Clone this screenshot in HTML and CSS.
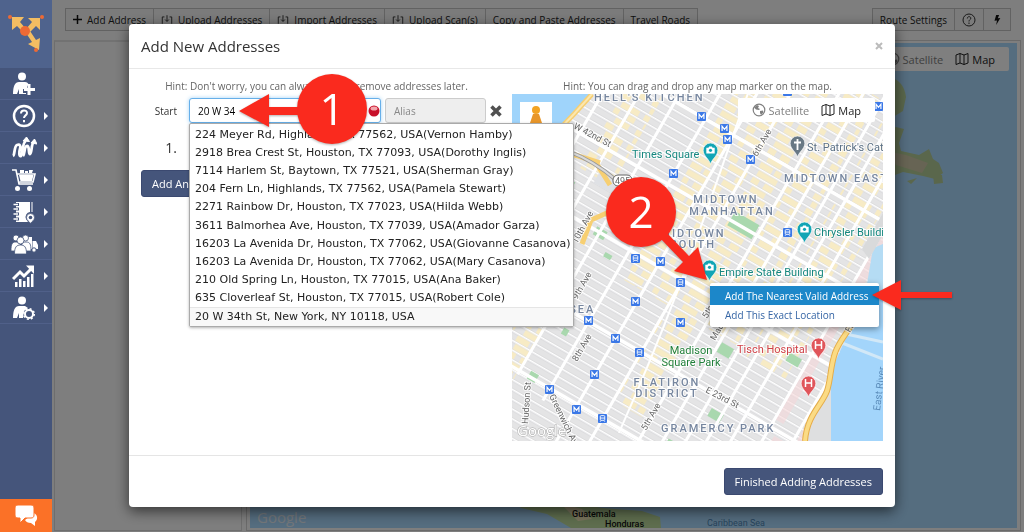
FILE: index.html
```html
<!DOCTYPE html>
<html lang="en">
  <head>
    <meta charset="UTF-8" />
    <meta name="viewport" content="width=device-width, initial-scale=1.0" />
    <title>Add New Addresses</title>
    <link rel="stylesheet" href="styles.css">
  </head>
  <body>
    <!-- Shared icons -->
    <svg class="defs" aria-hidden="true">
      <symbol id="tray" viewBox="0 0 14 12">
        <path d="M4 3H1.500v8M10 3h2.500v8M7 1v7M4.800 6 7 8.300 9.200 6" fill="none" stroke="currentColor" />
      </symbol>
      <symbol id="globe" viewBox="0 0 14 14">
        <circle cx="7" cy="7" r="5.800" fill="none" stroke="currentColor" stroke-width="1.200" />
        <path d="M2 4.500 5 2l2 1-1 2 2 1-1 1-3-.500zM8 8l3-.500.500 2L9 12 8 10z" fill="currentColor" />
      </symbol>
      <symbol id="fold" viewBox="0 0 14 14">
        <path d="M1 3l4-1.500v9.500L1 12.500zM5 1.500 9 3v9.500L5 11M9 3l4-1.500v9.500L9 12.500" fill="none" stroke="currentColor" />
      </symbol>
      <symbol id="metro" viewBox="0 0 10 10">
        <rect width="10" height="10" rx="1" fill="#3b78e7" />
        <path d="M2.300 7.800V2.500L5 6l2.700-3.500v5.300" fill="none" stroke="#fff" stroke-width="1.300" />
      </symbol>
      <symbol id="train" viewBox="0 0 10 10">
        <rect width="10" height="10" rx="1" fill="#3b78e7" />
        <rect x="2.500" y="1.800" width="5" height="5.200" rx="1" fill="none" stroke="#fff" />
        <path d="M2.500 4.500h5M3.500 7 2.500 8.500M6.500 7l1 1.500" stroke="#fff" />
      </symbol>
      <symbol id="pin" viewBox="0 0 16 22">
        <path d="M8 21.500C7.500 17 1 13.500 1 8a7 7 0 0 1 14 0c0 5.500-6.500 9-7 13.500z" fill="currentColor" stroke="#fff" stroke-width=".600" />
      </symbol>
      <symbol id="camera" viewBox="0 0 16 22">
        <use href="#pin" />
        <path d="M4 5.500h2l.700-1.200h2.600l.700 1.200h2v5.500H4z" fill="#fff" />
        <circle cx="8" cy="8" r="1.500" fill="currentColor" />
      </symbol>
    </svg>

    <div class="app">
      <nav class="sidebar">
        <a class="logo" href="#" aria-label="Home">
          <svg viewBox="0 0 36 38" width="36" height="38">
            <g fill="#f3bd62">
              <path d="M15 17 9 11l-5 4V2h12l-4 5 6 7zM18 14l6-7-4-4h12v12l-4-4-7 7zM18 18l4-2 6 9 4-2-1 12-11-6 4-2z" />
            </g>
            <g fill="#ed6a35">
              <circle cx="17" cy="16" r="5" /><circle cx="2" cy="2" r="2" />
              <circle cx="34" cy="2" r="2" /><circle cx="28" cy="35" r="2" />
            </g>
          </svg>
        </a>
        <a class="nav-item" href="#" aria-label="Add user">
          <svg viewBox="0 0 24 24" width="24" height="24" fill="#fff">
            <circle cx="10" cy="4.500" r="4" />
            <path d="M1 22c0-8 2-12 6-12h6c2 0 3 1 4 3l-2 1v3h-4v4h3v1H7v-5l-2 5z" />
            <path d="M17 12v11M12 17.500h11" stroke="#fff" stroke-width="3" />
          </svg>
        </a>
        <a class="nav-item more" href="#" aria-label="Help">
          <svg viewBox="0 0 24 24" width="24" height="24" fill="none" stroke="#fff">
            <circle cx="12" cy="12" r="10" stroke-width="2.500" />
            <path d="M9 9.500c0-4 6-4 6-.500 0 2.500-3 2.200-3 5M12 16v2.200" stroke-width="2" />
          </svg>
        </a>
        <a class="nav-item more" href="#" aria-label="Routes">
          <svg viewBox="0 0 26 24" width="26" height="24" fill="none" stroke="#fff" stroke-width="2.800">
            <path d="M2 20c2-1 1-10 4-11s4 1 3 4-1 8 1 7 1-14 5-15" />
            <path d="M12 20c2-2 1-10 4-10s1 8 3 8 1-11 4-12" />
            <path d="M12 5l3.500-4 3 4.500zM20 7l3.500-4 2.500 5z" fill="#fff" stroke-width="1" />
          </svg>
        </a>
        <a class="nav-item more" href="#" aria-label="Orders">
          <svg viewBox="0 0 24 24" width="24" height="24" fill="#fff">
            <path d="M0 2h4l3 14h14M5.500 6H23l-2 8H7.500" fill="none" stroke="#fff" stroke-width="1.600" />
            <path d="M7 7h14.500l-1.500 6H8.500zM8 2h4v3H8zM13 3h3v2h-3zM17 2h4l-1 3h-3z" />
            <circle cx="5.500" cy="20.500" r="2.500" /><circle cx="17.500" cy="20.500" r="2.500" />
          </svg>
        </a>
        <a class="nav-item more" href="#" aria-label="Address book">
          <svg viewBox="0 0 24 24" width="24" height="24" fill="#fff">
            <path d="M4 2h14v10a5 5 0 0 0-4 7l2 3H4z" />
            <path d="M1.500 4.500H7M1.500 9H7M1.500 14H7M1.500 19H7" stroke="#45557b" stroke-width="3" />
            <path d="M1.500 4.500H6M1.500 9H6M1.500 14H6M1.500 19H6" stroke="#fff" stroke-width="1.500" />
            <path d="M18.500 23.500c-1-2-4-3-4-6a4 4 0 0 1 8 0c0 3-3 4-4 6z" stroke="#45557b" stroke-width=".700" />
            <circle cx="18.500" cy="17.500" r="1.800" fill="#45557b" /><path d="M19.500 2h1v10h-1z" />
          </svg>
        </a>
        <a class="nav-item more" href="#" aria-label="Team">
          <svg viewBox="0 0 28 24" width="28" height="24" fill="#fff">
            <path d="M14 5h8v12h-8zM22.500 9H26l2 4v4h-5.500z" />
            <circle cx="24" cy="18" r="2.200" stroke="#45557b" />
            <g stroke="#45557b" stroke-width=".800">
              <circle cx="6" cy="6" r="3" /><circle cx="15.500" cy="6" r="3" />
              <path d="M1 19c0-7 1-9 5-9s5 2 5 9zM11 19c0-7 1-9 5-9s5 2 5 9z" />
              <circle cx="10.500" cy="8.500" r="3.500" /><path d="M4.500 22c0-7 2-9 6-9s6 2 6 9z" />
            </g>
          </svg>
        </a>
        <a class="nav-item more" href="#" aria-label="Reports">
          <svg viewBox="0 0 24 24" width="24" height="24" fill="#fff">
            <path d="M3 18h2.500v5H3zM7 15h2.500v8H7zM11 17h2.500v6H11zM15 13h2.500v10H15zM19 10h2.500v13H19z" />
            <path d="M1 15l7-7 4 4 7-7" fill="none" stroke="#fff" stroke-width="3" /><path d="M14 1.500h8V10z" />
          </svg>
        </a>
        <a class="nav-item more" href="#" aria-label="Account settings">
          <svg viewBox="0 0 24 24" width="24" height="24" fill="#fff">
            <circle cx="10" cy="4.500" r="4" />
            <path d="M1 22c0-8 2-12 6-12h6l3 2-4 3-1 7H7v-5l-2 5z" />
            <circle cx="17" cy="18" r="4" fill="none" stroke="#fff" stroke-width="2" />
            <circle cx="17" cy="18" r="5.300" fill="none" stroke="#fff" stroke-width="1.500" stroke-dasharray="2 2.160" />
          </svg>
        </a>
        <a class="chat" href="#" aria-label="Chat">
          <svg viewBox="0 0 24 24" width="24" height="24" fill="#fff">
            <path d="M20 9c4 2 4 7 1 9v4l-4-3c-3 0-5-1-6-3" />
            <path d="M4 1h13c2 0 3 1 3 3v7c0 2-1 3-3 3h-6l-5 5v-5H4c-2 0-3-1-3-3V4c0-2 1-3 3-3z" stroke="#fb7127" />
          </svg>
        </a>
      </nav>

      <main class="content">
        <div class="toolbar">
          <div class="btn-group">
            <button type="button"><svg width="9" height="9" viewBox="0 0 9 9"><path d="M4.500 0v9M0 4.500h9" stroke="#111" stroke-width="1.500" /></svg>Add Address</button>
            <button type="button"><svg width="12" height="11"><use href="#tray" /></svg>Upload Addresses</button>
            <button type="button"><svg width="12" height="11"><use href="#tray" /></svg>Import Addresses</button>
            <button type="button"><svg width="12" height="11"><use href="#tray" /></svg>Upload Scan(s)</button>
            <button type="button">Copy and Paste Addresses</button>
            <button type="button">Travel Roads</button>
          </div>
          <div class="btn-group">
            <button type="button">Route Settings</button>
            <button type="button" aria-label="Help"><svg width="14" height="14" viewBox="0 0 14 14" fill="none" stroke="#333"><circle cx="7" cy="7" r="6" /><path d="M5.300 5.500c0-2.500 3.500-2.300 3.500-.300C8.800 6.700 7 6.500 7 8.500M7 9.500V11" /></svg></button>
            <button type="button" aria-label="Quick actions"><svg width="12" height="10" viewBox="0 0 12 12"><path d="M5 0h3.500L7 4l3-.500L5 12l1-5.500-3 .500z" fill="#111" /></svg></button>
          </div>
        </div>

        <div class="workspace">
          <div class="routes-panel"></div>
          <div class="map-panel">
            <div class="world-map">
              <svg class="map-art" viewBox="0 0 767 485" preserveAspectRatio="xMaxYMax slice">
                <rect width="767" height="485" fill="#aadaff" />
                <path d="M620 34h20q14 4 16 20l-3 14-10 6-23 2z" fill="#b5cf98" />
                <path d="M620 96l26-12 8 2-5 14 2 8 18 4 10-6 4 10 6 4 4 10-8 6-12-3-20-4-16 6-17-6z" fill="#b5cf98" />
                <path d="M636 108l20 4 22 8-6 10-26-8z" fill="#cfc9a8" />
                <path d="M683 131l9 1 1 8-9 1zM657 138l10-3-6 6z" fill="#b5cf98" />
                <path d="M262 455l40 0 20 4 30 6 40 3 18 6 1 11h-90l-24-14-26-6z" fill="#bddb9c" />
                <path d="M310 460l22 6 10 10-14 2z" fill="#f2e6b8" />
                <text class="word-mark" x="7" y="480">Google</text>
                <g class="country"><text x="322" y="474">Guatemala</text><text x="355" y="484">Honduras</text></g>
                <text class="sea" x="457" y="483">Caribbean Sea</text>
              </svg>
              <div class="map-type">
                <button type="button"><svg width="14" height="14"><use href="#globe" /></svg>Satellite</button>
                <button type="button" class="active"><svg width="14" height="14"><use href="#fold" /></svg>Map</button>
              </div>
            </div>
          </div>
        </div>
      </main>
    </div>

    <div class="overlay">
      <section class="modal" role="dialog" aria-labelledby="modal-title">
        <header class="modal-header">
          <h1 id="modal-title">Add New Addresses</h1>
          <button type="button" class="close" aria-label="Close">
            <svg width="8" height="8" viewBox="0 0 8 8"><path d="M1 1l6 6M7 1 1 7" stroke="#bbb" stroke-width="2" /></svg>
          </button>
        </header>

        <div class="modal-body">
          <form class="addresses">
            <p class="hint">Hint: Don't worry, you can always add or remove addresses later.</p>
            <div class="address-row">
              <label for="start">Start</label>
              <div class="combo">
                <input id="start" type="text" value="20 W 34" autocomplete="off" />
                <svg class="status" width="12" height="12" viewBox="0 0 12 12"><circle cx="6" cy="6" r="5.500" fill="#c8102a" /><ellipse cx="6" cy="3.500" rx="3.500" ry="2" fill="#f2a6ac" /></svg>
                <ul class="suggestions">
                  <li><a href="#">224 Meyer Rd, Highlands, TX 77562, USA(Vernon Hamby)</a></li>
                  <li><a href="#">2918 Brea Crest St, Houston, TX 77093, USA(Dorothy Inglis)</a></li>
                  <li><a href="#">7114 Harlem St, Baytown, TX 77521, USA(Sherman Gray)</a></li>
                  <li><a href="#">204 Fern Ln, Highlands, TX 77562, USA(Pamela Stewart)</a></li>
                  <li><a href="#">2271 Rainbow Dr, Houston, TX 77023, USA(Hilda Webb)</a></li>
                  <li><a href="#">3611 Balmorhea Ave, Houston, TX 77039, USA(Amador Garza)</a></li>
                  <li><a href="#">16203 La Avenida Dr, Houston, TX 77062, USA(Giovanne Casanova)</a></li>
                  <li><a href="#">16203 La Avenida Dr, Houston, TX 77062, USA(Mary Casanova)</a></li>
                  <li><a href="#">210 Old Spring Ln, Houston, TX 77015, USA(Ana Baker)</a></li>
                  <li><a href="#">635 Cloverleaf St, Houston, TX 77015, USA(Robert Cole)</a></li>
                  <li class="geocoded"><a href="#">20 W 34th St, New York, NY 10118, USA</a></li>
                </ul>
              </div>
              <input class="alias" type="text" placeholder="Alias" aria-label="Alias" />
              <button type="button" class="remove" aria-label="Remove address">
                <svg width="12" height="12" viewBox="0 0 12 12"><path d="M1.500 1.500l9 9M10.500 1.500l-9 9" stroke="#505050" stroke-width="3.500" /></svg>
              </button>
            </div>
            <p class="stop-number">1.</p>
            <button type="button" class="primary">Add Another Address</button>
          </form>

          <div class="picker">
            <p class="hint">Hint: You can drag and drop any map marker on the map.</p>
            <div class="city-map">
              <svg class="map-art" viewBox="0 0 371 347" preserveAspectRatio="xMidYMid slice">
                <defs>
                  <pattern id="blocks" width="28" height="8.500" patternUnits="userSpaceOnUse">
                    <rect width="28" height="8.500" fill="#e4e4e5" /><path d="M0 .800h28" stroke="#fff" stroke-width="1.600" />
                    <path d="M0 2h28M0 8.300h28" stroke="#cfcfd2" stroke-width=".500" />
                  </pattern>
                  <pattern id="shops" width="62" height="34" patternUnits="userSpaceOnUse">
                    <path d="M2 2h14v6H2zM19 2h7v6h-7zM40 2h16v6H40zM4 10.500h22v6H4zM34 10.500h9v6h-9zM2 19h8v6H2zM16 19h10v6H16zM38 19h20v6H38zM6 27.500h16v6H6zM34 27.500h6v6h-6zM50 27.500h8v6h-8z" fill="#faedc0" opacity=".850" />
                  </pattern>
                </defs>
                <rect width="371" height="347" fill="#e9e9e9" />
                <g transform="rotate(30)">
                  <rect x="-10" y="-200" width="560" height="560" fill="url(#blocks)" />
                  <rect x="190" y="-180" width="130" height="285" fill="url(#shops)" />
                  <rect x="334" y="-220" width="45" height="330" fill="url(#shops)" />
                  <rect x="92" y="-90" width="40" height="120" fill="url(#shops)" />
                  <rect x="118" y="158" width="26" height="140" fill="url(#shops)" />
                  <rect x="240" y="105" width="42" height="110" fill="url(#shops)" />
                  <rect x="115" y="22" width="55" height="14" fill="#dfe1e5" />
                  <g fill="#a9d8ae">
                    <path d="M252-10h28v16h-28zM85 45h14v13H85zM140 72h12v9h-12zM160 90h8v5h-8zM306 110h14v11h-14zM370 85h14v9h-14zM155 230h9v9h-9zM308 220h14v13h-14zM330 172h14v9h-14zM162 176h6v7h-6z" />
                  </g>
                  <path d="M390-190h10v340h-10zM420 92h18v100h-18zM398 165h18v40h-18z" fill="#f5d7d8" opacity=".600" />
                  <g stroke="#fff" stroke-width="3" fill="none">
                    <path d="M78-120V400M110-130V400M145-150V240M180-160V250M212-180V400M241-190V400M283-200V400M304-210V400M324-220V400M342-230V400M363-240V400M390-250V400M417-260V400" />
                    <path d="M-20-75H460M60 0H460M60 76H430M60 159H470M60 236H470" stroke-width="3.500" />
                    <path d="M202-130C225 0 245 80 262 240" stroke-width="2" />
                  </g>
                </g>
                <!-- water -->
                <path d="M0 0h79L62 17 38 43 0 70z" fill="#9fd4fb" />
                <path d="M371 150v197h-52l-1-50 3-24 12-27 16-34z" fill="#a3d5fb" />
                <path d="M371 150l-10 4-10 60 20-20z" fill="#b5dcf4" />
                <path d="M325 247l46 18M334 240l37 8" stroke="#d2e8f7" stroke-width="3" />
                <path d="M319 347v-52l-7 8-16 36v8z" fill="#dedfe0" />
                <path d="M350 155l21-36v22l-14 24z" fill="#d9dadb" />
                <!-- highways and tunnel -->
                <path d="M80 0 62 20 44 39M60 60l28 9M83 67l15 24M70 150l9-24 18-8" fill="none" stroke="#f7cf72" stroke-width="5" />
                <path d="M80 0 62 20 44 39" fill="none" stroke="#fce7ae" stroke-width="2" />
                <path d="M28 47l28 10q26 10 48 29" fill="none" stroke="#9b9b9b" stroke-width="4" />
                <path d="M28 47l28 10q26 10 48 29" fill="none" stroke="#d9d9d9" stroke-width="2" />
                <path d="M343 225c-6 12-16 22-20 34-5 15-4 26-8 38-5 14-20 24-22 50" fill="none" stroke="#e5ad4a" stroke-width="6" />
                <path d="M343 225c-6 12-16 22-20 34-5 15-4 26-8 38-5 14-20 24-22 50" fill="none" stroke="#fbdb84" stroke-width="4" />
                <!-- stations -->
                <g>
                  <use href="#metro" x="185" y="18" width="9" height="9" /><use href="#metro" x="208" y="30" width="9" height="9" />
                  <use href="#metro" x="211" y="41" width="9" height="9" /><use href="#metro" x="234" y="61" width="9" height="9" />
                  <use href="#metro" x="228" y="8" width="9" height="9" /><use href="#metro" x="362" y="8" width="9" height="9" />
                  <use href="#metro" x="271" y="-7" width="9" height="9" /><use href="#metro" x="157" y="75" width="9" height="9" />
                  <use href="#metro" x="144" y="163" width="9" height="9" /><use href="#train" x="119" y="160" width="9" height="9" />
                  <use href="#train" x="164" y="184" width="9" height="9" /><use href="#metro" x="119" y="203" width="9" height="9" />
                  <use href="#metro" x="72" y="222" width="9" height="9" /><use href="#metro" x="164" y="224" width="9" height="9" />
                  <use href="#metro" x="99" y="240" width="9" height="9" /><use href="#train" x="123" y="254" width="9" height="9" />
                  <use href="#metro" x="78" y="276" width="9" height="9" /><use href="#metro" x="33" y="291" width="9" height="9" />
                  <use href="#metro" x="60" y="311" width="9" height="9" /><use href="#train" x="86" y="320" width="9" height="9" />
                  <use href="#train" x="271" y="134" width="9" height="9" />
                </g>
                <!-- landmarks -->
                <g color="#12a5b5">
                  <use href="#camera" x="190" y="48" width="17" height="23" /><use href="#camera" x="284" y="127" width="17" height="23" />
                  <use href="#camera" x="189" y="165" width="17" height="23" />
                </g>
                <use href="#pin" x="277" y="41" width="17" height="23" color="#687884" />
                <path d="M285.500 45v11M282 48.500h7" stroke="#fff" stroke-width="1.800" />
                <g color="#e0555a">
                  <use href="#pin" x="298" y="243" width="17" height="23" /><use href="#pin" x="288" y="281" width="17" height="23" />
                </g>
                <path d="M303.500 247v8M309.500 247v8M303.500 251h6M293.500 285v8M299.500 285v8M293.500 289h6" stroke="#fff" stroke-width="1.500" />
                <rect x="101" y="81" width="19" height="11" rx="5" fill="#fff" stroke="#666" />
                <text class="street" x="103" y="90">495</text>
                <g class="street">
                  <text transform="translate(61 34) rotate(28)">W 42nd St</text>
                  <text transform="translate(65 150) rotate(-62)">10th Ave</text>
                  <text transform="translate(65 206) rotate(-60)">9th Ave</text>
                  <text transform="translate(65 268) rotate(-60)">8th Ave</text>
                  <text transform="translate(245 63) rotate(-60)">6th Ave</text>
                  <text transform="translate(134 337) rotate(-60)">5th Ave</text>
                  <text transform="translate(195 225) rotate(-60)">5th Ave</text>
                  <text transform="translate(203 247) rotate(-60)">Madison</text>
                  <text transform="translate(16 330) rotate(-86)">Hudson St</text>
                  <text transform="translate(37 302) rotate(64)">Greenwich Ave</text>
                  <text transform="translate(193 298) rotate(27)">E 23rd St</text>
                  <text transform="translate(338 239) rotate(-60)">FDR Dr</text>
                </g>
                <text class="river" transform="translate(368 317) rotate(-83)">East River</text>
                <g class="district">
                  <text x="82" y="7">HELL'S KITCHEN</text>
                  <text x="272" y="88">MIDTOWN EAST</text>
                  <text x="214" y="109" text-anchor="middle">MIDTOWN</text><text x="220" y="121" text-anchor="middle">MANHATTAN</text>
                  <text x="181" y="143" text-anchor="middle">MIDTOWN</text><text x="181" y="154" text-anchor="middle">SOUTH</text>
                  <text x="22" y="219">CHELSEA</text>
                  <text x="155" y="292" text-anchor="middle">FLATIRON</text><text x="155" y="303" text-anchor="middle">DISTRICT</text>
                  <text x="149" y="338">GRAMERCY PARK</text>
                </g>
                <g class="place">
                  <text x="120" y="64">Times Square</text>
                  <text x="302" y="142">Chrysler Building</text>
                  <text x="207" y="182">Empire State Building</text>
                </g>
                <text class="place church" x="295" y="57">St. Patrick's Cathedral</text>
                <g class="place park"><text x="179" y="260" text-anchor="middle">Madison</text><text x="179" y="272" text-anchor="middle">Square Park</text></g>
                <text class="place hospital" x="225" y="259">Tisch Hospital</text>
                <text class="word-mark outlined" x="5" y="342">Google</text>
                <g>
                  <rect x="8" y="8" width="32" height="32" fill="#fff" />
                  <circle cx="24" cy="16" r="4" fill="#f2a324" /><path d="M21 20h6l3 9-2 1h-8l-2-1z" fill="#e8962a" />
                </g>
              </svg>
              <div class="map-type">
                <button type="button"><svg width="14" height="14"><use href="#globe" /></svg>Satellite</button>
                <button type="button" class="active"><svg width="14" height="14"><use href="#fold" /></svg>Map</button>
              </div>
              <div class="context-menu">
                <button type="button" class="active">Add The Nearest Valid Address</button>
                <button type="button">Add This Exact Location</button>
              </div>
            </div>
          </div>
        </div>

        <footer class="modal-footer">
          <button type="button" class="primary">Finished Adding Addresses</button>
        </footer>

        <!-- Numbered callouts -->
        <svg class="callout callout-one" width="130" height="72" viewBox="0 0 130 72">
          <path d="M1 38l30-17v13h35v8H31v12z" /><circle cx="94" cy="36" r="35" /><text x="94" y="52">1</text>
        </svg>
        <svg class="callout callout-two" width="104" height="106" viewBox="0 0 104 106">
          <path d="M102 104l-33-9 9-9-23-24 6-6 23 24 9-9z" /><circle cx="36" cy="36" r="35" /><text x="36" y="52">2</text>
        </svg>
        <svg class="callout callout-three" width="82" height="32" viewBox="0 0 82 32">
          <path d="M1 16 30 1v12h51v6H30v12z" />
        </svg>
      </section>
    </div>
  </body>
</html>
```
FILE: styles.css
```css
* {
  box-sizing: border-box;
}

body {
  margin: 0;
  font-family: "Open Sans", "Noto Sans", sans-serif;
  font-size: 11px;
  color: #333;
}

button,
input {
  font: inherit;
}

a {
  color: inherit;
  text-decoration: none;
}

.defs {
  position: absolute;
  width: 0;
  height: 0;
}

.app {
  display: flex;
  height: 100vh;
}

/* Sidebar stays above the dimmed page */
.sidebar {
  position: relative;
  z-index: 5;
  flex: 0 0 52px;
  display: flex;
  flex-direction: column;
  background: #45557b;
}

.logo {
  height: 68px;
  padding: 15px 8px;
  background: #4f638d;
}

.nav-item {
  position: relative;
  display: flex;
  align-items: center;
  justify-content: center;
  height: 32px;
  padding-right: 4px;
  border-bottom: 1px solid #506089;
}

.nav-item.more::after {
  content: "";
  position: absolute;
  right: 4px;
  border: 4px solid transparent;
  border-left-color: #fff;
  border-right: 0;
}

.chat {
  display: flex;
  align-items: center;
  justify-content: center;
  height: 33px;
  margin-top: auto;
  background: #fb7127;
}

.content {
  flex: 1;
  display: flex;
  flex-direction: column;
  min-width: 0;
  background: #fdfdfd;
}

.toolbar {
  display: flex;
  justify-content: space-between;
  padding: 8px 13px 9px;
}

.btn-group {
  display: flex;
}

.btn-group button {
  display: flex;
  align-items: center;
  gap: 5px;
  height: 23px;
  padding: 0 7px;
  border: 1px solid #c4c4c4;
  border-left-width: 0;
  background: #f6f6f6;
  color: #222;
  font-size: 10px;
  white-space: nowrap;
}

.btn-group button:first-child {
  border-left-width: 1px;
}

.workspace {
  flex: 1;
  display: flex;
  gap: 4px;
  padding: 0 3px 2px 2px;
}

.routes-panel {
  flex: 0 0 188px;
  border: 1px solid #ddd;
  border-top: 2px solid #e4e4e4;
}

.map-panel {
  flex: 1;
  display: flex;
  padding: 2px 3px;
  border: 1px solid #d4d4d4;
}

.world-map,
.city-map {
  position: relative;
  flex: 1;
}

.map-art {
  display: block;
  width: 100%;
  height: 100%;
}

.map-type {
  position: absolute;
  top: 4px;
  right: 8px;
  display: flex;
  gap: 12px;
  height: 24px;
  padding: 0 14px;
  border-radius: 2px;
  background: #fff;
}

.map-type button {
  display: flex;
  align-items: center;
  gap: 3px;
  padding: 0;
  border: 0;
  background: none;
  color: #808080;
}

.map-type .active {
  color: #222;
}

.overlay {
  position: fixed;
  inset: 0;
  padding-top: 24px;
  background: rgba(0, 0, 0, 0.5);
}

.modal {
  position: relative;
  width: 75%;
  max-width: 766px;
  margin: 0 auto;
  border-radius: 4px;
  background: #fff;
  box-shadow: 0 4px 14px rgba(0, 0, 0, 0.6);
}

.modal-header {
  display: flex;
  align-items: center;
  justify-content: space-between;
  height: 45px;
  padding: 0 12px;
  border-bottom: 1px solid #e8e8e8;
}

.modal-header h1 {
  margin: 0;
  font-size: 15px;
  font-weight: 400;
}

.close,
.remove {
  display: flex;
  padding: 0;
  border: 0;
  background: none;
}

.modal-body {
  display: flex;
  gap: 8px;
  padding: 9px 12px 14px;
}

.addresses {
  flex: 1;
}

.picker {
  flex: 0 0 50%;
}

.hint {
  margin: 0;
  font-size: 10px;
  line-height: 16px;
  text-align: center;
  color: #666;
}

.addresses .hint {
  padding-right: 12px;
}

.address-row {
  display: flex;
  align-items: center;
  gap: 4px;
  margin-top: 4px;
  font-size: 10px;
}

.address-row label,
.stop-number {
  width: 36px;
  text-align: right;
}

.address-row label {
  margin-right: 8px;
}

.combo {
  position: relative;
  flex: 1;
}

.address-row input {
  display: block;
  width: 100%;
  height: 25px;
  padding: 0 8px;
  border: 1px solid #ccc;
  border-radius: 3px;
}

.address-row .combo input {
  border-color: #66afe9;
  outline: 0;
  box-shadow: 0 0 4px #a5d3f5;
}

.status {
  position: absolute;
  top: 7px;
  right: 1px;
}

.address-row .alias {
  width: 101px;
  background: #eee;
}

.alias::placeholder {
  color: #888;
}

.remove {
  padding: 0 2px 0 0;
}

/* Autocomplete list */
.suggestions {
  position: absolute;
  z-index: 2;
  top: 100%;
  left: 0;
  display: grid;
  grid-auto-rows: 1fr;
  min-width: 380px;
  height: 204px;
  margin: 0;
  padding: 2px 0 0;
  border: 1px solid #aaa;
  border-radius: 2px;
  background: #fff;
  box-shadow: 0 1px 3px rgba(0, 0, 0, 0.3);
  list-style: none;
  font-family: "DejaVu Sans", sans-serif;
  font-size: 11px;
  line-height: 18px;
  color: #222;
  white-space: nowrap;
}

.suggestions a {
  display: block;
  padding: 0 2px 0 5px;
}

.suggestions .geocoded {
  border-top: 1px solid #e5e5e5;
  background: #f8f8f8;
}

.stop-number {
  margin: 15px 0 13px;
  font-size: 14px;
  line-height: 19px;
}

.primary {
  height: 27px;
  padding: 0 10px;
  border: 1px solid #3b4970;
  border-radius: 3px;
  background: #45557b;
  color: #fff;
  font-size: 11px;
}

.city-map {
  aspect-ratio: 371 / 347;
}

.context-menu {
  position: absolute;
  top: 189px;
  left: 198px;
  display: flex;
  flex-direction: column;
  width: 169px;
  padding: 3px 0;
  border-radius: 2px;
  background: #fff;
  box-shadow: 0 2px 6px rgba(0, 0, 0, 0.4);
  font-size: 10px;
}

.context-menu button {
  height: 19px;
  padding: 0 15px;
  border: 0;
  background: none;
  color: #3565a5;
  text-align: left;
  white-space: nowrap;
}

.context-menu .active {
  background: #1c87c9;
  color: #fff;
}

.modal-footer {
  display: flex;
  justify-content: flex-end;
  padding: 12px;
  border-top: 1px solid #e5e5e5;
}

/* Map lettering */
.street,
.place,
.district,
.river,
.country,
.sea {
  font-family: Roboto, sans-serif;
}

.street {
  font-size: 9px;
  fill: #666;
}

.river {
  font-size: 10px;
  fill: #5b8cba;
}

.district {
  font-size: 11px;
  font-weight: 500;
  letter-spacing: 2px;
  fill: #76869f;
}

.place {
  font-size: 11px;
  fill: #16877f;
}

.district text,
.place text,
.street text,
text.place {
  paint-order: stroke;
  stroke: rgba(255, 255, 255, 0.8);
  stroke-width: 2px;
}

.church {
  fill: #5b7085;
}

.park {
  fill: #23803c;
}

.hospital {
  fill: #cf4248;
}

.country {
  font-size: 9px;
  font-weight: 500;
  fill: #111;
}

.sea {
  font-size: 9px;
  fill: #4e87b5;
}

.word-mark {
  font-size: 15px;
  fill: #e6eef5;
}

.outlined {
  paint-order: stroke;
  stroke: #aaa;
  stroke-width: 1px;
  fill: #fff;
}

/* Callouts */
.callout {
  position: absolute;
  z-index: 3;
  fill: #fa2a1e;
  filter: drop-shadow(0 1px 1px rgba(0, 0, 0, 0.3));
  pointer-events: none;
}

.callout text {
  fill: #fff;
  font-size: 44px;
  text-anchor: middle;
}

.callout-one {
  top: 49px;
  left: 109px;
}

.callout-two {
  top: 152px;
  left: 476px;
}

.callout-three {
  top: 255px;
  left: 742px;
}
```
